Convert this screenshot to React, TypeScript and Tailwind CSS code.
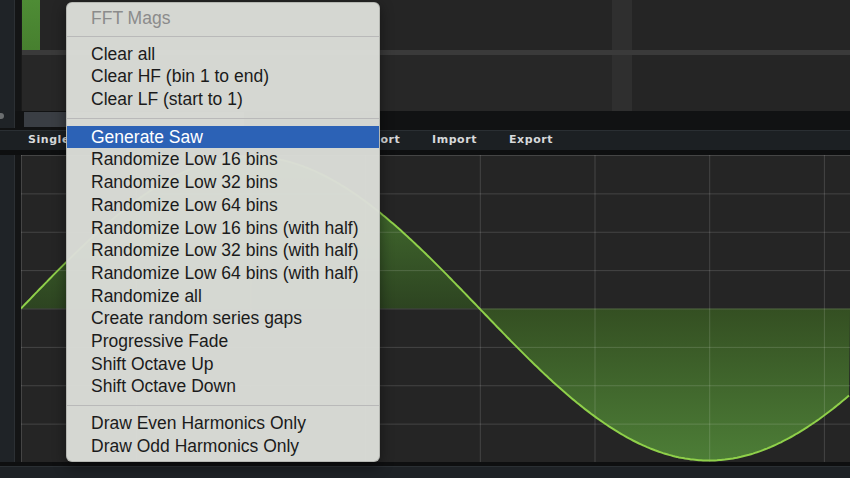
import React from "react";

const W = 829;
const H = 307;
const MID = 153.5;
const AMP = 152;
const PERIOD = 917;

const curveY = (x: number) => MID - AMP * Math.sin((2 * Math.PI * x) / PERIOD);

function buildPaths() {
  const half = PERIOD / 2;
  const up: string[] = [];
  const down: string[] = [];
  const all: string[] = [];
  for (let x = 0; x <= W; x += 2) {
    const p = `${x},${curveY(x).toFixed(1)}`;
    all.push(p);
    if (x <= half) up.push(p);
    else down.push(p);
  }
  return {
    upper: `M0,${MID} L${up.join(" L")} L${half},${MID} Z`,
    lower: `M${half},${MID} L${down.join(" L")} L${W},${MID} Z`,
    line: `M${all.join(" L")}`,
  };
}

const MENU = [
  ["Clear all", "Clear HF (bin 1 to end)", "Clear LF (start to 1)"],
  [
    "Generate Saw",
    "Randomize Low 16 bins",
    "Randomize Low 32 bins",
    "Randomize Low 64 bins",
    "Randomize Low 16 bins (with half)",
    "Randomize Low 32 bins (with half)",
    "Randomize Low 64 bins (with half)",
    "Randomize all",
    "Create random series gaps",
    "Progressive Fade",
    "Shift Octave Up",
    "Shift Octave Down",
  ],
  ["Draw Even Harmonics Only", "Draw Odd Harmonics Only"],
];

function Graph() {
  const { upper, lower, line } = buildPaths();
  const cols = Array.from({ length: 8 }, (_, i) => i * 114.7 + 0.5);
  const rows = Array.from({ length: 9 }, (_, i) => i * 38.375 + 0.5);
  return (
    <svg width={W} height={H} viewBox={`0 0 ${W} ${H}`} className="block bg-[#252525]">
      <defs>
        <linearGradient id="gUp" gradientUnits="userSpaceOnUse" x1="0" y1={MID} x2="0" y2="0">
          <stop offset="0" stopColor="#2d4421" />
          <stop offset="1" stopColor="#4a7a33" />
        </linearGradient>
        <linearGradient id="gDown" gradientUnits="userSpaceOnUse" x1="0" y1={MID} x2="0" y2={H}>
          <stop offset="0" stopColor="#344f22" />
          <stop offset="1" stopColor="#4d7e37" />
        </linearGradient>
      </defs>
      <path d={upper} fill="url(#gUp)" />
      <path d={lower} fill="url(#gDown)" />
      {cols.map((x) => (
        <line key={"c" + x} x1={x} y1={0} x2={x} y2={H} stroke="rgba(255,255,255,0.15)" strokeWidth={1} />
      ))}
      {rows.map((y) => (
        <line key={"r" + y} x1={0} y1={y} x2={W} y2={y} stroke="rgba(255,255,255,0.15)" strokeWidth={1} />
      ))}
      <path d={line} fill="none" stroke="#8fd04a" strokeWidth={2} />
    </svg>
  );
}

function Menu() {
  return (
    <div className="absolute left-[66px] top-[2px] w-[314px] h-[460px] rounded-[6px] bg-[rgba(219,221,216,0.97)] border border-[rgba(0,0,0,0.15)] shadow-[0_4px_14px_rgba(0,0,0,0.45)] pt-[4px] font-['Liberation_Sans',Arial,sans-serif] text-[17.5px] text-[#1b1b1b]">
      <div className="h-[22.7px] leading-[22.7px] pl-[24px] text-[#8b8b8b]">FFT Mags</div>
      <div className="h-[13px] flex items-center">
        <div className="w-full border-t border-[#b9b9b9]" />
      </div>
      {MENU.map((group, gi) => (
        <div key={gi}>
          {group.map((item) => (
            <div
              key={item}
              className={
                item === "Generate Saw"
                  ? "h-[22.7px] leading-[22.7px] pl-[24px] bg-[#2c62b6] text-white"
                  : "h-[22.7px] leading-[22.7px] pl-[24px]"
              }
            >
              {item}
            </div>
          ))}
          {gi < MENU.length - 1 && (
            <div className={(gi === 0 ? "h-[15px]" : "h-[14px]") + " flex items-center"}>
              <div className="w-full border-t border-[#b9b9b9]" />
            </div>
          )}
        </div>
      ))}
    </div>
  );
}

export default function App() {
  return (
    <div className="relative w-[850px] h-[478px] overflow-hidden bg-[#1d2124] flex flex-col">
      {/* top panel */}
      <div className="flex h-[111px]">
        <div className="w-[15px] bg-[#1f2327] border-r border-[#2c3034]" />
        <div className="w-[6px] bg-[#141516]" />
        <div className="flex-1 flex flex-col bg-[#252525] border-l border-[#1a1a1a]">
          <div className="flex h-[50px]">
            <div className="w-[18px] bg-gradient-to-b from-[#4e8c35] to-[#47802f]" />
            <div className="w-[572px]" />
            <div className="w-[20px] bg-[#2f2f2f]" />
          </div>
          <div className="h-[5px] bg-[#3a3a3a]" />
          <div className="flex flex-1">
            <div className="w-[590px] bg-[#272727]" />
            <div className="w-[20px] bg-[#2f2f2f]" />
            <div className="flex-1" />
          </div>
        </div>
      </div>

      {/* scroll strip */}
      <div className="flex h-[19px] bg-[#111213]">
        <div className="w-[15px] h-[17px] bg-[#1f2327] border-r border-[#2c3034] flex items-start pt-[2px]">
          <div className="w-[4px] h-[6px] bg-[#6b6e70] rounded-r-full" />
        </div>
        <div className="ml-[9px] mt-[1px] w-[220px] h-[15px] bg-[#3a3e44]" />
      </div>

      {/* toolbar */}
      <div className="flex items-center h-[20px] bg-[#1c2023] border-t border-[#2a2f33] pl-[28px] font-['DejaVu_Sans',sans-serif] font-bold text-[11px] tracking-[0.05em] text-[#d7d9db]">
        <span className="w-[344px]">Single</span>
        <span className="w-[60px]">Sort</span>
        <span className="w-[77px]">Import</span>
        <span>Export</span>
      </div>

      <div className="h-[5px] bg-[#0e0f10]" />

      {/* graph */}
      <div className="flex h-[307px]">
        <div className="w-[15px] bg-[#1f2327] border-r border-[#2c3034]" />
        <div className="w-[6px] bg-[#141516]" />
        <Graph />
      </div>

      <div className="h-[4px] bg-[#0e0f10]" />
      <div className="flex-1 bg-[#1e2226] border-t border-[#2a2f33]" />

      <Menu />
    </div>
  );
}
